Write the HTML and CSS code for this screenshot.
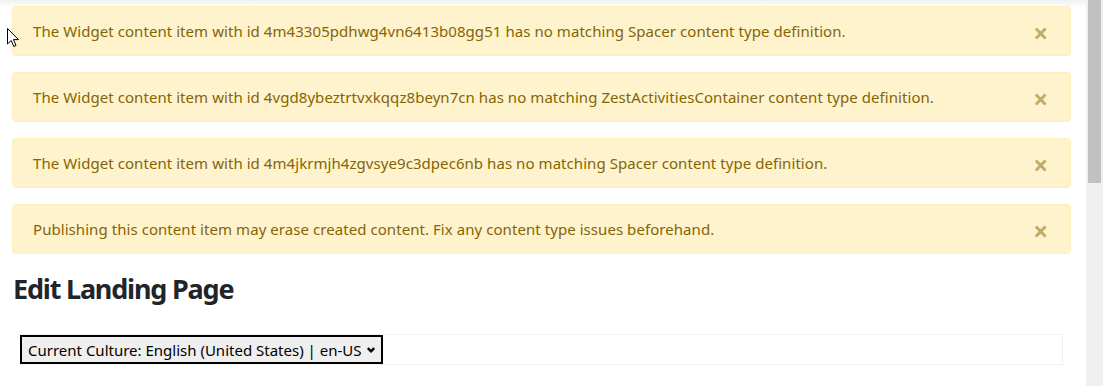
FILE: index.html
```html
<!DOCTYPE html>
<html lang="en">
<head>
<meta charset="utf-8">
<title>Edit Landing Page</title>
<link rel="stylesheet" href="styles.css">
</head>
<body>
<div class="window">
  <main class="main">
    <div class="topshade"></div>
    <div class="alert">
      <span class="alert-text">The Widget content item with id 4m43305pdhwg4vn6413b08gg51 has no matching Spacer content type definition.</span>
      <button class="close" type="button">×</button>
    </div>
    <div class="alert">
      <span class="alert-text">The Widget content item with id 4vgd8ybeztrtvxkqqz8beyn7cn has no matching ZestActivitiesContainer content type definition.</span>
      <button class="close" type="button">×</button>
    </div>
    <div class="alert">
      <span class="alert-text">The Widget content item with id 4m4jkrmjh4zgvsye9c3dpec6nb has no matching Spacer content type definition.</span>
      <button class="close" type="button">×</button>
    </div>
    <div class="alert">
      <span class="alert-text">Publishing this content item may erase created content. Fix any content type issues beforehand.</span>
      <button class="close" type="button">×</button>
    </div>
    <h2 class="title">Edit Landing Page</h2>
    <div class="culture-box">
      <div class="culture-select">
        <span>Current Culture: English (United States) | en-US</span>
        <svg class="chev" width="10" height="8" viewBox="0 0 10 8"><path d="M1.8 2.2 L5 5.4 L8.2 2.2" fill="none" stroke="#000" stroke-width="2.4"/></svg>
      </div>
    </div>
    <svg class="cursor" width="13" height="20" viewBox="0 0 13 20"><path d="M0.5 0.5 L0.5 16 L4.2 12.5 L6.8 18.5 L9 17.5 L6.5 11.6 L11.5 11.6 Z" fill="#fff" stroke="#000" stroke-width="1" stroke-linejoin="miter"/></svg>
  </main>
  <div class="scrollbar"><div class="thumb"></div></div>
</div>
</body>
</html>
```
FILE: styles.css
```css
html, body {
  margin: 0;
  padding: 0;
  background: #fff;
}
body {
  font-family: "Noto Sans", "Open Sans", sans-serif;
  color: #212529;
  overflow: hidden;
}
.window {
  display: flex;
  width: 1103px;
  height: 386px;
}
.main {
  position: relative;
  width: 1086px;
  padding: 6px 15px 0 12px;
  box-sizing: border-box;
}
.topshade {
  position: absolute;
  left: 0;
  top: 0;
  right: 0;
  height: 8px;
  background: linear-gradient(#f1f1f1, rgba(255,255,255,0));
  pointer-events: none;
}
.alert {
  position: relative;
  display: flex;
  align-items: center;
  height: 50px;
  box-sizing: border-box;
  margin-bottom: 16px;
  padding: 0 20px;
  background: #fff3cd;
  border: 1px solid #ffeeba;
  border-radius: 4px;
  color: #856404;
  font-size: 15px;
  letter-spacing: 0.06px;
}
.alert-text {
  flex: 1;
}
.close {
  border: 0;
  background: none;
  padding: 0;
  margin: 4px 2px 0 0;
  font-family: "Noto Sans", sans-serif;
  font-size: 26px;
  font-weight: 700;
  line-height: 1;
  color: #c2ab68;
}
.title {
  margin: 19px 0 0 1px;
  font-size: 27px;
  font-weight: 700;
  line-height: 32px;
  letter-spacing: -1.2px;
  color: #212529;
}
.culture-box {
  margin: 29px 8px 0 8px;
  height: 31px;
  border: 1px solid #f2f2f2;
  box-sizing: border-box;
  position: relative;
}
.culture-select {
  position: absolute;
  left: -1px;
  top: 0;
  display: inline-flex;
  align-items: center;
  gap: 5px;
  height: 29px;
  box-sizing: border-box;
  padding: 0 5px 0 6px;
  border: 2px solid #000;
  background: #efefef;
  font-size: 15px;
  color: #000;
}
.chev {
  display: block;
}
.cursor {
  position: absolute;
  left: 7px;
  top: 28px;
}
.scrollbar {
  width: 17px;
  height: 386px;
  background: #f0f0f0;
  position: relative;
}
.thumb {
  margin-left: 2px;
  width: 13px;
  height: 183px;
  background: #c1c1c1;
}
```
